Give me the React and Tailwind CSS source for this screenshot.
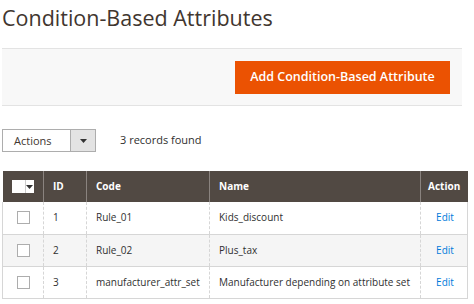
const rows = [
  { id: 1, code: 'Rule_01', name: 'Kids_discount' },
  { id: 2, code: 'Rule_02', name: 'Plus_tax' },
  { id: 3, code: 'manufacturer_attr_set', name: 'Manufacturer depending on attribute set' },
];

const Caret = () => (
  <svg width="7" height="4" viewBox="0 0 7 4" className="fill-[#333]">
    <path d="M0 0h7L3.5 4z" />
  </svg>
);

const App = () => {
  return (
    <div className="w-[474px] h-[304px] bg-white overflow-hidden font-['Open_Sans',sans-serif] text-[#303030]">
      <h1 className="pl-[2px] pt-[3px] text-[21.5px] leading-[30px] font-normal text-[#41362f]">
        Condition-Based Attributes
      </h1>

      <div className="mt-[15px] ml-[2px] w-[460px] h-[58px] bg-[#f8f8f8] border-y border-[#e3e3e3] flex items-center justify-end pr-[12px]">
        <button className="h-[33px] w-[215px] bg-[#eb5202] text-white text-[12.5px] font-semibold">
          Add Condition-Based Attribute
        </button>
      </div>

      <div className="mt-[23px] ml-[2px] flex items-center">
        <div className="flex h-[23px] border border-[#adadad] bg-white">
          <div className="w-[67px] pl-[11px] text-[11px] leading-[21px] text-[#41362f]">Actions</div>
          <div className="w-[25px] bg-[#e3e3e3] border-l border-[#adadad] flex items-center justify-center">
            <Caret />
          </div>
        </div>
        <span className="ml-[24px] text-[11px] text-[#303030]">3 records found</span>
      </div>

      <table className="mt-[19px] ml-[2px] w-[466px] border-collapse text-[10px] table-fixed">
        <thead>
          <tr className="bg-[#514943] text-white h-[31px]">
            <th className="w-[41px] border-r border-[#8a837f] px-0">
              <div className="mx-auto flex h-[13px] w-[22px] bg-white">
                <div className="w-[13px]" />
                <div className="flex-1 flex items-center justify-center border-l border-[#ccc]">
                  <Caret />
                </div>
              </div>
            </th>
            <th className="w-[43px] border-r border-[#8a837f] text-left pl-[9px] font-bold">ID</th>
            <th className="w-[123px] border-r border-[#8a837f] text-left pl-[9px] font-bold">Code</th>
            <th className="w-[211px] border-r border-[#8a837f] text-left pl-[9px] font-bold">Name</th>
            <th className="text-left pl-[7px] font-bold">Action</th>
          </tr>
        </thead>
        <tbody>
          {rows.map((row, i) => (
            <tr
              key={row.id}
              className={`h-[32px] border-b border-x border-[#d6d6d6] ${i % 2 === 1 ? 'bg-[#f5f5f5]' : 'bg-white'}`}
            >
              <td className="border-r border-dashed border-[#d6d6d6]">
                <div className="mx-auto h-[13px] w-[13px] border border-[#adadad] bg-white" />
              </td>
              <td className="border-r border-dashed border-[#d6d6d6] pl-[9px]">{row.id}</td>
              <td className="border-r border-dashed border-[#d6d6d6] pl-[9px]">{row.code}</td>
              <td className="border-r border-dashed border-[#d6d6d6] pl-[9px]">{row.name}</td>
              <td className="text-center pl-[2px] text-[#007bdb]">Edit</td>
            </tr>
          ))}
        </tbody>
      </table>
    </div>
  );
};

export default App;
